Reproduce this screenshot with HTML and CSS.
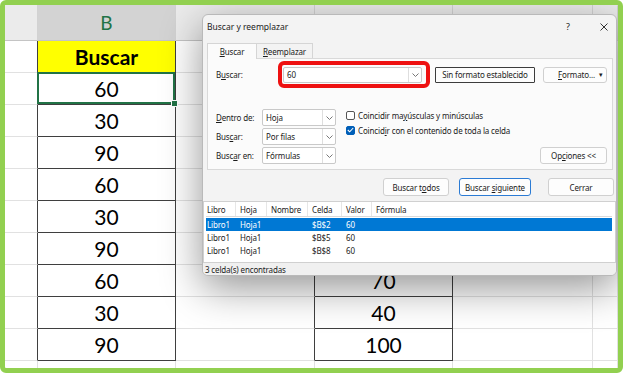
FILE: index.html
```html
<!doctype html>
<html>
<head>
    <meta charset="utf-8">
    <title>Buscar y reemplazar</title>
    <link rel="stylesheet" href="styles.css">
</head>

<body>
<div class="frame">
    <div class="sheet">
        <div class="hd"></div><div class="hd on">B</div><div class="hd"></div><div class="hd"></div><div class="hd"></div><div class="hd"></div>

        <div class="edge"></div><div class="box yel">Buscar</div><div class="edge"></div><div class="box"></div><div></div><div></div>
        <div class="edge"></div><div class="box cur">60</div><div class="edge"></div><div class="box"></div><div></div><div></div>
        <div class="edge"></div><div class="box">30</div><div class="edge"></div><div class="box"></div><div></div><div></div>
        <div class="edge"></div><div class="box">90</div><div class="edge"></div><div class="box"></div><div></div><div></div>
        <div class="edge"></div><div class="box">60</div><div class="edge"></div><div class="box"></div><div></div><div></div>
        <div class="edge"></div><div class="box">30</div><div class="edge"></div><div class="box"></div><div></div><div></div>
        <div class="edge"></div><div class="box">90</div><div class="edge"></div><div class="box"></div><div></div><div></div>
        <div class="edge"></div><div class="box">60</div><div class="edge"></div><div class="box">70</div><div></div><div></div>
        <div class="edge"></div><div class="box">30</div><div class="edge"></div><div class="box">40</div><div></div><div></div>
        <div class="edge"></div><div class="box">90</div><div class="edge"></div><div class="box">100</div><div></div><div></div>
        <div></div><div></div><div></div><div></div><div></div><div></div>
    </div>

    <div class="dialog">
        <div class="titlebar">
            <span class="title">Buscar y reemplazar</span>
            <span class="tb-btn help">?</span>
            <span class="tb-btn close">
                <svg width="8" height="8" viewBox="0 0 8 8"><path d="M0.5 0.5L7.5 7.5M7.5 0.5L0.5 7.5" stroke="#333" stroke-width="1" fill="none"/></svg>
            </span>
        </div>

        <div class="body">
            <div class="tabs">
                <span class="tab active"><span><u>B</u>uscar</span></span>
                <span class="tab"><span><u>R</u>eemplazar</span></span>
            </div>
            <div class="panel">
                <div class="find-row">
                    <span class="lbl find-lbl">B<u>u</u>scar:</span>
                    <div class="hl">
                        <div class="combo wide">
                            <span class="val">60</span>
                            <span class="arrow"><svg width="7" height="4" viewBox="0 0 7 4"><path d="M0.5 0.5L3.5 3.5L6.5 0.5" stroke="#777" fill="none"/></svg></span>
                        </div>
                    </div>
                    <button class="btn strong"><span>Sin formato establecido</span></button>
                    <button class="btn fmt"><span><u>F</u>ormato...</span><span class="caret">&#9662;</span></button>
                </div>

                <div class="opts">
                    <div class="opt-grid">
                        <span class="lbl"><u>D</u>entro de:</span>
                        <div class="combo"><span class="val">Hoja</span><span class="arrow"><svg width="7" height="4" viewBox="0 0 7 4"><path d="M0.5 0.5L3.5 3.5L6.5 0.5" stroke="#777" fill="none"/></svg></span></div>
                        <span class="lbl">Bus<u>c</u>ar:</span>
                        <div class="combo"><span class="val">Por filas</span><span class="arrow"><svg width="7" height="4" viewBox="0 0 7 4"><path d="M0.5 0.5L3.5 3.5L6.5 0.5" stroke="#777" fill="none"/></svg></span></div>
                        <span class="lbl">Busc<u>a</u>r en:</span>
                        <div class="combo"><span class="val">Fórmulas</span><span class="arrow"><svg width="7" height="4" viewBox="0 0 7 4"><path d="M0.5 0.5L3.5 3.5L6.5 0.5" stroke="#777" fill="none"/></svg></span></div>
                    </div>
                    <div class="checks">
                        <div class="check"><span class="cb"></span><span>Coincidir ma<u>y</u>úsculas y minúsculas</span></div>
                        <div class="check"><span class="cb on"><svg width="7" height="6" viewBox="0 0 7 6"><path d="M0.8 3L2.7 4.8L6.2 1" stroke="#fff" stroke-width="1.1" fill="none"/></svg></span><span>Coincid<u>i</u>r con el contenido de toda la celda</span></div>
                    </div>
                    <button class="btn opt-btn"><span>Op<u>c</u>iones &lt;&lt;</span></button>
                </div>
            </div>
        </div>

        <div class="actions">
            <button class="btn act"><span>Buscar t<u>o</u>dos</span></button>
            <button class="btn act next"><span>Buscar <u>s</u>iguiente</span></button>
            <button class="btn act close-btn"><span>Cerrar</span></button>
        </div>

        <div class="results">
            <div class="rrow head">
                <span>Libro</span><span>Hoja</span><span>Nombre</span><span>Celda</span><span>Valor</span><span>Fórmula</span>
            </div>
            <div class="rrow picked">
                <span>Libro1</span><span>Hoja1</span><span></span><span>$B$2</span><span>60</span><span></span>
            </div>
            <div class="rrow">
                <span>Libro1</span><span>Hoja1</span><span></span><span>$B$5</span><span>60</span><span></span>
            </div>
            <div class="rrow">
                <span>Libro1</span><span>Hoja1</span><span></span><span>$B$8</span><span>60</span><span></span>
            </div>
        </div>

        <div class="status">3 celda(s) encontradas</div>
    </div>
</div>
</body>
</html>
```

FILE: styles.css
```css
* {
  box-sizing: border-box;
}

body {
  margin: 0;
  background: #ffffff;
}

.frame {
  position: relative;
  width: 623px;
  height: 373px;
  border: 5px solid #92d050;
  border-radius: 6px;
  overflow: hidden;
  background: #ffffff;
}

/* hoja de calculo */
.sheet {
  display: grid;
  grid-template-columns: 33px 138px 139px 138px 140px 1fr;
  grid-template-rows: 36px repeat(11, 32px);
  font-family: Lato, "Liberation Sans", sans-serif;
}

.sheet > div {
  display: flex;
  align-items: center;
  justify-content: center;
  border-right: 1px solid #e1e1e1;
  border-bottom: 1px solid #e1e1e1;
  font-size: 21px;
  color: #000000;
}

.sheet > .hd {
  background: #ebebeb;
  border-right-color: #d2d2d2;
  border-bottom-color: #c4c4c4;
  font-size: 19px;
  color: #444444;
}

.sheet > .hd.on {
  background: #d3d3d3;
  color: #217346;
}

.sheet > .edge {
  border-right-color: #3f3f3f;
}

.sheet > .box {
  border-right-color: #3f3f3f;
  border-bottom-color: #3f3f3f;
}

.sheet > .yel {
  background: #ffff00;
  font-weight: 700;
}

.sheet > .cur {
  position: relative;
}

.sheet > .cur::before {
  content: "";
  position: absolute;
  top: -1px;
  left: -1px;
  right: 0;
  bottom: 0;
  border: 2px solid #217346;
}

.sheet > .cur::after {
  content: "";
  position: absolute;
  right: -3px;
  bottom: -3px;
  width: 5px;
  height: 5px;
  background: #217346;
  border: 1px solid #ffffff;
}

/* cuadro de dialogo */
.dialog {
  position: absolute;
  left: 197px;
  top: 9px;
  width: 415px;
  height: 262px;
  display: flex;
  flex-direction: column;
  background: #f3f3f3;
  border: 1px solid #b9b9b9;
  border-radius: 6px;
  box-shadow: 0 12px 40px rgba(0, 0, 0, 0.42);
  overflow: hidden;
  font-family: "Noto Sans", sans-serif;
  font-size: 8px;
  letter-spacing: -0.15px;
  color: #1b1b1b;
}

.dialog u {
  text-decoration-thickness: 1px;
  text-underline-offset: 1px;
}

.titlebar {
  display: flex;
  align-items: center;
  height: 25px;
  padding: 0 0 2px 4px;
}

.title {
  flex: 1;
  font-size: 8.5px;
  letter-spacing: 0;
}

.tb-btn {
  display: flex;
  align-items: center;
  justify-content: center;
  width: 24px;
}

.help {
  margin-right: 12px;
  font-size: 9px;
}

.body {
  padding: 3px 3px 0 4px;
}

.tabs {
  display: flex;
  height: 15px;
}

.tab {
  display: flex;
  align-items: center;
  justify-content: center;
  width: 56px;
  height: 15px;
  border: 1px solid #d5d5d5;
  border-left: none;
  border-bottom: none;
}

.tab.active {
  position: relative;
  z-index: 1;
  width: 50px;
  height: 16px;
  border-left: 1px solid #d5d5d5;
  background: #fbfbfb;
}

.panel {
  height: 112px;
  padding: 2px 5px 0 8px;
  background: #fbfbfb;
  border: 1px solid #d9d9d9;
}

.find-row {
  display: flex;
  align-items: center;
  height: 27px;
}

.find-lbl {
  width: 62px;
}

.hl {
  display: flex;
  align-items: center;
  width: 152px;
  height: 27px;
  padding: 0 4px 0 1px;
  border: 4px solid #ee1111;
  border-radius: 6px;
}

.combo {
  display: flex;
  height: 17px;
  background: #ffffff;
  border: 1px solid #c9c9c9;
  border-radius: 2px;
}

.combo.wide {
  width: 139px;
  height: 16px;
}

.combo .val {
  flex: 1;
  display: flex;
  align-items: center;
  padding-left: 3px;
}

.combo .arrow {
  display: flex;
  align-items: center;
  justify-content: center;
  width: 13px;
  border-left: 1px solid #dedede;
}

.btn {
  display: flex;
  align-items: center;
  justify-content: center;
  height: 16px;
  padding: 0;
  font: inherit;
  letter-spacing: inherit;
  color: inherit;
  background: #fdfdfd;
  border: 1px solid #d0d0d0;
  border-radius: 3px;
}

.btn.strong {
  width: 100px;
  margin-left: 5px;
  border-color: #3c3c3c;
  border-radius: 1px;
}

.btn.fmt {
  width: 64px;
  margin-left: 8px;
  justify-content: flex-start;
  padding: 0 3px 0 14px;
}

.btn.fmt .caret {
  margin-left: auto;
  font-size: 7px;
}

.opts {
  display: flex;
  align-items: flex-start;
  margin-top: 21px;
}

.opt-grid {
  display: grid;
  grid-template-columns: 46px 74px;
  grid-auto-rows: 17px;
  row-gap: 2px;
  align-items: center;
}

.checks {
  display: flex;
  flex-direction: column;
  gap: 3px;
  margin-left: 10px;
}

.check {
  display: flex;
  align-items: center;
  height: 12px;
}

.cb {
  display: flex;
  align-items: center;
  justify-content: center;
  width: 9px;
  height: 9px;
  margin-right: 3px;
  background: #ffffff;
  border: 1px solid #555555;
  border-radius: 2px;
}

.cb.on {
  background: #005fb8;
  border-color: #005fb8;
}

.opt-btn {
  align-self: flex-end;
  width: 67px;
  height: 17px;
  margin-left: auto;
}

.actions {
  display: flex;
  justify-content: flex-end;
  margin-top: 8px;
  padding-right: 2px;
}

.btn.act {
  width: 66px;
  height: 18px;
}

.btn.next {
  width: 72px;
  margin-left: 10px;
  border-color: #2b7bd4;
}

.btn.close-btn {
  margin-left: 17px;
}

.results {
  height: 61px;
  margin-top: 5px;
  padding: 0 3px 0 2px;
  background: #ffffff;
  border: 1px solid #d0d0d0;
  border-bottom: none;
}

.rrow {
  display: grid;
  grid-template-columns: 30px 31px 41px 34px 30px 1fr;
  height: 13px;
  align-items: center;
}

.rrow span {
  padding-left: 4px;
}

.rrow span:first-child {
  padding-left: 1px;
}

.rrow.head {
  height: 15px;
  margin-bottom: 1px;
  border-bottom: 1px solid #dadada;
}

.rrow.head span {
  height: 14px;
  display: flex;
  align-items: center;
  border-right: 1px solid #e6e6e6;
}

.rrow.head span:last-child {
  border-right: none;
}

.rrow.picked {
  background: #0078d4;
  color: #ffffff;
}

.status {
  flex: 1;
  display: flex;
  align-items: center;
  padding-left: 2px;
  background: #f0f0f0;
  border-top: 1px solid #d0d0d0;
}
```
